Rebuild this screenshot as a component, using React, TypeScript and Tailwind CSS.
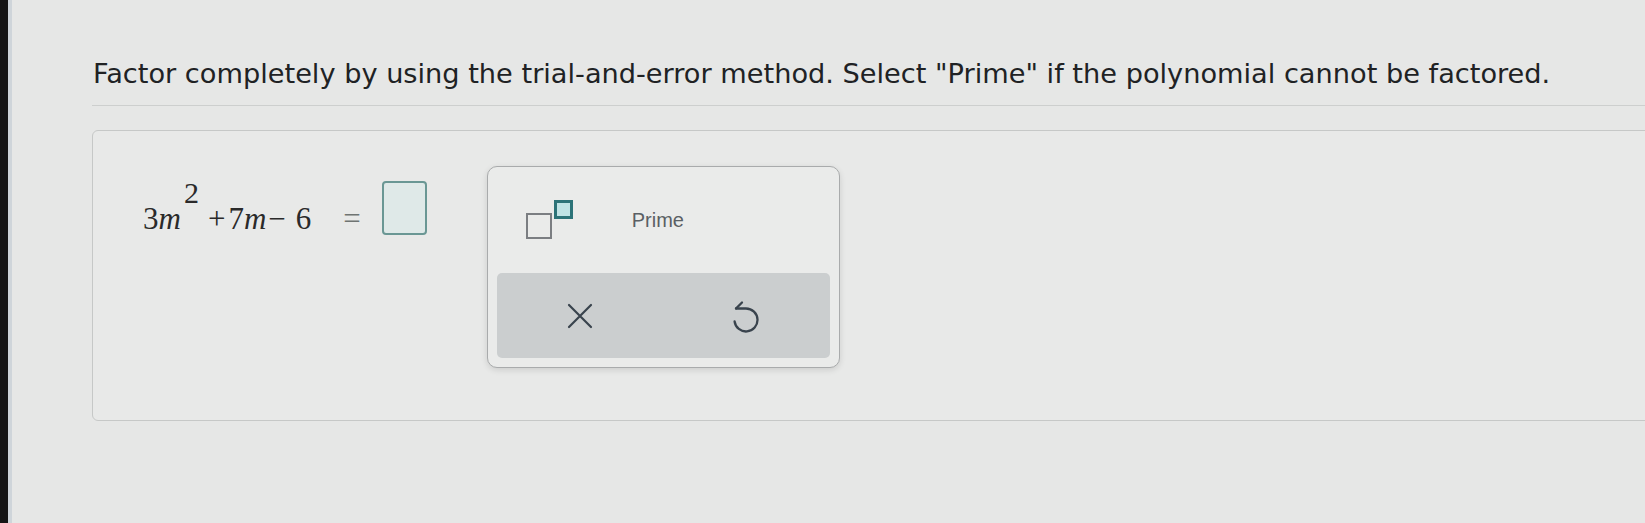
import React from "react";

function XIcon() {
  return (
    <svg width="26" height="26" viewBox="0 0 26 26" fill="none" stroke="#39434d" strokeWidth="2.2" strokeLinecap="round">
      <path d="M2 2L24 24M24 2L2 24" />
    </svg>
  );
}

function UndoIcon() {
  return (
    <svg width="30" height="34" viewBox="0 0 30 34" fill="none" stroke="#39434d" strokeWidth="2.3" strokeLinecap="round" strokeLinejoin="round">
      <path d="M5 9.5L11 3.5" />
      <path d="M5 9.5H15A11.5 11.5 0 1 1 3.6 22.5" />
    </svg>
  );
}

function SuperIcon() {
  return (
    <div className="relative h-[39px] w-[47px]">
      <div className="absolute bottom-0 left-0 h-[26px] w-[26px] border-[2px] border-[#7b7e82]" />
      <div className="absolute right-0 top-0 h-[19px] w-[19px] border-[3px] border-[#2c7378] bg-[#bfe3e5]" />
    </div>
  );
}

export default function App() {
  return (
    <div className="flex h-[523px] w-full overflow-hidden bg-[#e6e7e6]">
      <div className="w-[8px] shrink-0 bg-[#151515]" />
      <div className="w-[4px] shrink-0 bg-[#cfd5da]" />
      <div className="flex min-w-0 flex-1 flex-col pl-[80px]">
        <div className="border-b border-[#cdcfce] pb-[15px] pt-[58px]">
          <p
            className="whitespace-nowrap pl-[1px] text-[27.2px] leading-[32px] text-[#202224]"
            style={{ fontFamily: '"DejaVu Sans", Verdana, sans-serif' }}
          >
            Factor completely by using the trial-and-error method. Select "Prime" if the polynomial cannot be factored.
          </p>
        </div>
        <div className="-mr-6 mt-[24px] flex h-[291px] items-start rounded-l-[6px] border border-[#c6c8c7] bg-[#e8e9e8] pl-[50px] pt-[35px]">
          <div className="mt-[15px] flex h-[54px] items-end">
            <div
              className="mb-[1px] flex items-baseline whitespace-nowrap text-[31px] leading-none text-[#2a2a2a]"
              style={{ fontFamily: '"Liberation Serif", "Times New Roman", serif' }}
            >
              <span>3</span>
              <span className="italic">m</span>
              <span className="relative -top-[26px] ml-[3px] text-[30px]">2</span>
              <span className="ml-[9px]">+</span>
              <span className="ml-[3px]">7</span>
              <span className="italic">m</span>
              <span className="ml-[2px]">−</span>
              <span className="ml-[10px]">6</span>
              <span className="ml-[32px] text-[#6f7472]">=</span>
            </div>
            <div className="ml-[21px] h-[54px] w-[45px] rounded-[4px] border-[2px] border-[#6a9794] bg-[#dfe9e8]" />
          </div>
          <div className="ml-[60px] flex h-[202px] w-[353px] flex-col rounded-[10px] border border-[#a9abac] bg-[#eaebea] p-[9px] shadow-[0_2px_6px_rgba(0,0,0,0.12)]">
            <div className="mt-[24px] flex h-[39px] items-center pl-[29px]">
              <SuperIcon />
              <span
                className="ml-[59px] text-[20px] leading-none text-[#5a5f64]"
                style={{ fontFamily: '"Liberation Sans", Arial, sans-serif' }}
              >
                Prime
              </span>
            </div>
            <div className="mt-[34px] grid h-[87px] grid-cols-2 rounded-[5px] bg-[#cbcecf]">
              <div className="flex items-center justify-center">
                <XIcon />
              </div>
              <div className="flex items-center justify-center">
                <UndoIcon />
              </div>
            </div>
          </div>
        </div>
      </div>
    </div>
  );
}
